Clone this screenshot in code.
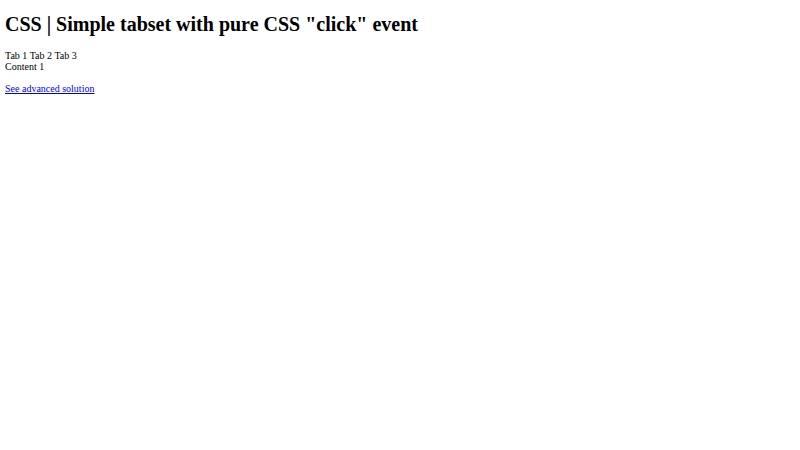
export default function App() {
  return (
    <div className="m-[5px] text-black text-[10px] leading-[1.15]" style={{ fontFamily: '"Liberation Serif", "Times New Roman", serif' }}>
      <h1 className="text-[20px] font-bold my-[13.4px] leading-[1.15]">CSS | Simple tabset with pure CSS "click" event</h1>
      <div>
        <div>
          <label>Tab 1</label> <label>Tab 2</label> <label>Tab 3</label>
        </div>
        <div>Content 1</div>
      </div>
      <p className="my-[10px]">
        <a href="#" className="text-[#0000ee] underline">See advanced solution</a>
      </p>
    </div>
  );
}
